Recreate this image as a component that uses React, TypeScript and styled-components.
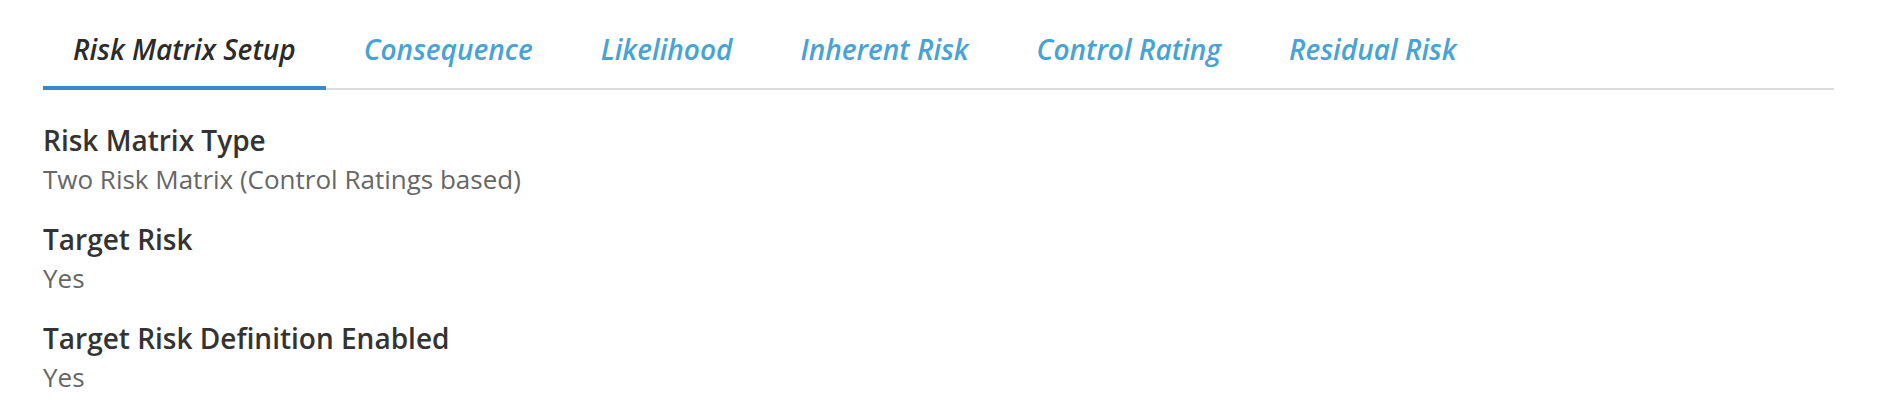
import React from 'react';
import styled, { createGlobalStyle } from 'styled-components';

const GlobalStyle = createGlobalStyle`
  body {
    margin: 0;
    background: #ffffff;
    font-family: "Open Sans", "Liberation Sans", sans-serif;
  }
`;

const Page = styled.div`
  padding: 0 68px 0 43px;
`;

const TabBar = styled.div`
  display: flex;
  gap: 8px;
  border-bottom: 2px solid #dcdcdc;
`;

const Tab = styled.div<{ $active?: boolean }>`
  padding: 30px 30px 18px;
  margin-bottom: -2px;
  font-size: 28px;
  line-height: 38px;
  font-style: italic;
  font-weight: 600;
  color: ${(p) => (p.$active ? '#2b2b2b' : '#47a3d5')};
  border-bottom: 4px solid ${(p) => (p.$active ? '#3a87c9' : 'transparent')};
  cursor: pointer;
  white-space: nowrap;
`;

const Fields = styled.div`
  display: flex;
  flex-direction: column;
  gap: 21px;
  padding-top: 31px;
`;

const Field = styled.div`
  display: flex;
  flex-direction: column;
`;

const Label = styled.div`
  font-size: 28px;
  font-weight: 600;
  color: #333333;
  line-height: 39px;
`;

const Value = styled.div`
  font-size: 26px;
  color: #666666;
  line-height: 39px;
`;

const tabs = ['Risk Matrix Setup', 'Consequence', 'Likelihood', 'Inherent Risk', 'Control Rating', 'Residual Risk'];

const fields = [
  { label: 'Risk Matrix Type', value: 'Two Risk Matrix (Control Ratings based)' },
  { label: 'Target Risk', value: 'Yes' },
  { label: 'Target Risk Definition Enabled', value: 'Yes' },
];

export default function App() {
  return (
    <Page>
      <GlobalStyle />
      <TabBar>
        {tabs.map((t, i) => (
          <Tab key={t} $active={i === 0}>
            {t}
          </Tab>
        ))}
      </TabBar>
      <Fields>
        {fields.map((f) => (
          <Field key={f.label}>
            <Label>{f.label}</Label>
            <Value>{f.value}</Value>
          </Field>
        ))}
      </Fields>
    </Page>
  );
}
